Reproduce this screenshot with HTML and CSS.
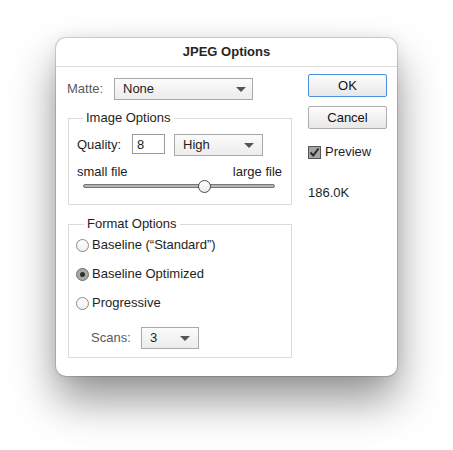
FILE: index.html
```html
<!DOCTYPE html>
<html>
<head>
<meta charset="utf-8">
<link rel="stylesheet" href="styles.css">
</head>
<body>
<div class="dialog">
  <div class="titlebar">JPEG Options</div>
  <div class="body">
    <div class="left">
      <div class="matte-row">
        <span class="label-grey">Matte:</span>
        <div class="select select-matte"><span>None</span><span class="arrow"></span></div>
      </div>
      <fieldset class="group group-image">
        <legend>Image Options</legend>
        <div class="quality-row">
          <span class="quality-label">Quality:</span>
          <div class="input">8</div>
          <div class="select select-high"><span>High</span><span class="arrow"></span></div>
        </div>
        <div class="size-row"><span>small file</span><span>large file</span></div>
        <div class="slider">
          <div class="track"></div>
          <div class="thumb" style="left: 115px"></div>
        </div>
      </fieldset>
      <fieldset class="group group-format">
        <legend>Format Options</legend>
        <div class="radio-row"><span class="radio"></span><span>Baseline (“Standard”)</span></div>
        <div class="radio-row"><span class="radio checked"></span><span>Baseline Optimized</span></div>
        <div class="radio-row"><span class="radio"></span><span>Progressive</span></div>
        <div class="scans-row">
          <span class="label-grey">Scans:</span>
          <div class="select select-scans"><span>3</span><span class="arrow"></span></div>
        </div>
      </fieldset>
    </div>
    <div class="right">
      <div class="button button-ok">OK</div>
      <div class="button button-cancel">Cancel</div>
      <div class="preview-row">
        <span class="checkbox"><svg width="11" height="11" viewBox="0 0 11 11"><path d="M1.5 5.5 L4.3 8.5 L9.5 1.5" fill="none" stroke="#2a2a2a" stroke-width="2"/></svg></span>
        <span>Preview</span>
      </div>
      <div class="filesize">186.0K</div>
    </div>
  </div>
</div>
</body>
</html>
```

FILE: styles.css
```css
html, body {
  margin: 0;
  padding: 0;
  background: #ffffff;
}
body {
  font-family: "Liberation Sans", Arial, Helvetica, sans-serif;
  font-size: 13px;
  line-height: 16px;
  color: #1e1e1e;
  padding-top: 38px;
  padding-left: 56px;
  box-sizing: border-box;
  min-height: 450px;
  width: 453px;
  overflow: hidden;
}
.dialog {
  width: 341px;
  height: 338px;
  box-sizing: border-box;
  background: #ffffff;
  border-radius: 10px;
  box-shadow: 0 0 0 1px rgba(0,0,0,0.14), 0 0 14px rgba(0,0,0,0.08), 0 24px 44px rgba(0,0,0,0.42);
  display: flex;
  flex-direction: column;
}
.titlebar {
  line-height: 27px;
  text-align: center;
  font-weight: bold;
  color: #262626;
  border-bottom: 1px solid #dcdcdc;
  box-sizing: border-box;
  height: 29px;
}
.body {
  display: flex;
  padding: 9px 10px 0 12px;
}
.left {
  width: 224px;
  padding-top: 2px;
}
.right {
  margin-left: 16px;
  width: 79px;
  display: flex;
  flex-direction: column;
}
.matte-row {
  display: flex;
  align-items: center;
  height: 22px;
}
.label-grey {
  color: #5a5a5a;
}
.matte-row .label-grey {
  margin-left: -1px;
  width: 47px;
}
.select {
  box-sizing: border-box;
  height: 22px;
  border: 1px solid #a8a8a8;
  background: linear-gradient(#fbfbfb, #ececec);
  display: flex;
  align-items: center;
  justify-content: space-between;
  padding-left: 8px;
  padding-right: 6px;
  color: #1e1e1e;
}
.arrow {
  width: 0;
  height: 0;
  border-left: 5px solid transparent;
  border-right: 5px solid transparent;
  border-top: 5px solid #555;
}
.select-matte {
  width: 139px;
}
.group {
  margin: 0;
  border: 1px solid #dadada;
  padding: 0 9px 0 8px;
  min-width: 0;
}
.group legend {
  padding: 0 3px;
  margin-left: 6px;
  line-height: 16px;
  color: #1e1e1e;
}
.group-image {
  margin-top: 10px;
  padding-top: 8px;
  padding-bottom: 11px;
}
.quality-row {
  display: flex;
  align-items: flex-start;
  height: 22px;
}
.quality-label {
  width: 55px;
  line-height: 21px;
}
.input {
  box-sizing: border-box;
  width: 33px;
  height: 20px;
  border: 1px solid #9a9a9a;
  background: #fff;
  padding-left: 4px;
  line-height: 19px;
}
.select-high {
  margin-left: 9px;
  width: 89px;
  padding-left: 8px;
  padding-right: 8px;
}
.size-row {
  margin-top: 8px;
  display: flex;
  justify-content: space-between;
}
.slider {
  position: relative;
  margin-top: 0;
  height: 13px;
  margin-left: 6px;
  margin-right: 7px;
}
.track {
  position: absolute;
  left: 0;
  right: 0;
  top: 4px;
  height: 4px;
  box-sizing: border-box;
  border: 1px solid #777;
  border-radius: 2px;
  background: #b4b4b4;
}
.thumb {
  position: absolute;
  top: 0;
  width: 13px;
  height: 13px;
  box-sizing: border-box;
  border-radius: 50%;
  border: 1px solid #4a4a4a;
  background: linear-gradient(#ffffff, #ececec);
}
.group-format {
  margin-top: 11px;
  padding-top: 5px;
  padding-bottom: 8px;
  padding-left: 7px;
}
.group-format legend {
  margin-left: 8px;
}
.radio-row {
  display: flex;
  align-items: center;
  height: 16px;
  margin-bottom: 13px;
}
.radio-row:nth-of-type(3) {
  margin-bottom: 0;
}
.radio {
  box-sizing: border-box;
  width: 13px;
  height: 13px;
  border-radius: 50%;
  border: 1px solid #8a8a8a;
  background: linear-gradient(#ffffff, #efefef);
  margin-right: 3px;
  display: flex;
  align-items: center;
  justify-content: center;
}
.radio.checked {
  background: #a9a9a9;
  border-color: #6d6d6d;
}
.radio.checked::after {
  content: "";
  width: 5px;
  height: 5px;
  border-radius: 50%;
  background: #2e2e2e;
}
.scans-row {
  margin-top: 16px;
  display: flex;
  align-items: center;
  height: 22px;
  padding-left: 15px;
}
.scans-row .label-grey {
  width: 50px;
}
.select-scans {
  width: 58px;
  padding-left: 8px;
  padding-right: 8px;
}
.button {
  box-sizing: border-box;
  height: 23px;
  border: 1px solid #adadad;
  border-radius: 2px;
  background: linear-gradient(#fdfdfd, #e7e7e7);
  text-align: center;
  line-height: 21px;
  color: #111;
}
.button-ok {
  margin-top: -2px;
  border-color: #4a90de;
}
.button-cancel {
  margin-top: 9px;
}
.preview-row {
  margin-top: 16px;
  display: flex;
  align-items: center;
  height: 14px;
}
.checkbox {
  box-sizing: border-box;
  width: 13px;
  height: 13px;
  border: 1px solid #555;
  background: #a6a6a6;
  margin-right: 4px;
  display: flex;
  align-items: center;
  justify-content: center;
}
.checkbox svg {
  display: block;
}
.filesize {
  margin-top: 26px;
}
```
